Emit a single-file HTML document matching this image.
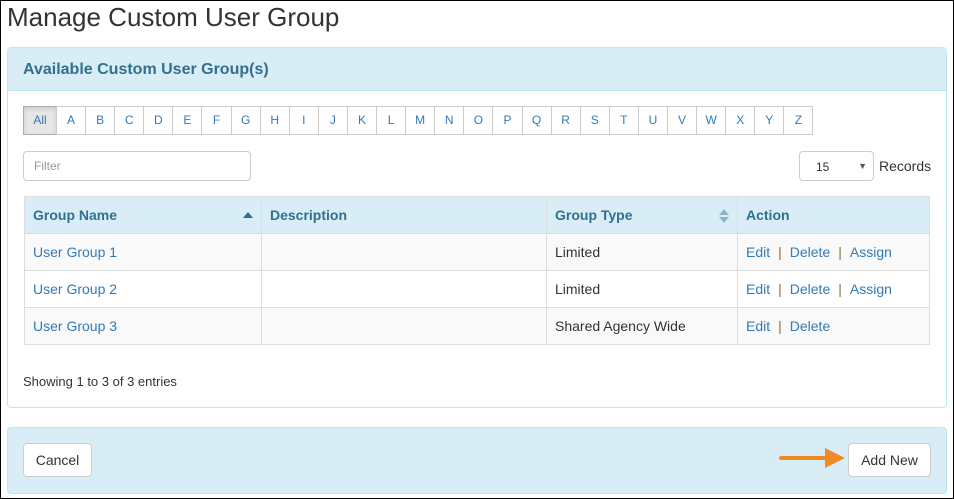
<!DOCTYPE html>
<html><head><style>
*{box-sizing:border-box;margin:0;padding:0}
body{width:954px;height:499px;background:#fff;font-family:"Liberation Sans",sans-serif;font-size:14px;color:#333;position:relative;overflow:hidden}
.frame{position:absolute;left:0;top:0;width:954px;height:499px;border:1px solid #000}
h1{position:absolute;left:7px;top:2px;font-size:26px;font-weight:normal;color:#333}
.panel{position:absolute;left:7px;top:47px;width:940px;height:361px;border:1px solid #bce8f1;border-radius:4px}
.ph{height:43px;background:#d9edf7;border-bottom:1px solid #bce8f1;color:#31708f;font-weight:bold;font-size:16px;padding:13px 15px}
.letters{position:absolute;left:23px;top:106px;display:flex;height:29px}
.letters span{border:1px solid #ccc;margin-left:-1px;height:29px;line-height:27px;text-align:center;color:#337ab7;font-size:12px;width:30.1px}
.letters span.all{width:34px;background:#e6e6e6;border-color:#adadad;box-shadow:inset 0 2px 4px rgba(0,0,0,.12);margin-left:0;color:#337ab7}
.filter{position:absolute;left:23px;top:151px;width:228px;height:30px;border:1px solid #ccc;border-radius:4px;color:#999;font-size:12px;padding:7px 10px}
.sel{position:absolute;left:799px;top:151px;width:75px;height:30px;border:1px solid #ccc;border-radius:4px;font-size:12px;padding:8px 16px}
.sel i{position:absolute;right:6px;top:9px;font-style:normal;font-size:9px;color:#555}
.rec{position:absolute;left:879px;top:158px}
table{position:absolute;left:24px;top:196px;width:906px;border-collapse:collapse}
td,th{border:1px solid #ddd;height:37px;padding:0 8px;text-align:left;position:relative}
th{background:#d9edf7;color:#31708f;font-weight:bold}
tr.o td{background:#f9f9f9}
a{color:#337ab7;text-decoration:none}
.sep{color:#8a6d3b;margin:0 8px}
.foot{position:absolute;left:7px;top:427px;width:940px;height:67px;background:#d9edf7;border:1px solid #bce8f1;border-radius:4px}
.btn{position:absolute;top:443px;height:34px;background:#fff;border:1px solid #ccc;border-radius:4px;line-height:32px;text-align:center;color:#333}
</style></head><body>
<h1>Manage Custom User Group</h1>
<div class="panel"><div class="ph">Available Custom User Group(s)</div></div>
<div class="letters"><span class="all">All</span><span>A</span><span>B</span><span>C</span><span>D</span><span>E</span><span>F</span><span>G</span><span>H</span><span>I</span><span>J</span><span>K</span><span>L</span><span>M</span><span>N</span><span>O</span><span>P</span><span>Q</span><span>R</span><span>S</span><span>T</span><span>U</span><span>V</span><span>W</span><span>X</span><span>Y</span><span>Z</span></div>
<div class="filter">Filter</div>
<div class="sel">15<i>▼</i></div>
<div class="rec">Records</div>
<table>
<tr><th style="width:237px">Group Name<svg style="position:absolute;right:8px;top:15px" width="10" height="6"><polygon points="0,6 5,0 10,6" fill="#31708f"/></svg></th><th style="width:285px">Description</th><th style="width:191px">Group Type<svg style="position:absolute;right:8px;top:12px" width="10" height="14"><polygon points="0,6 5,0 10,6" fill="#8ab4cc"/><polygon points="0,8 5,14 10,8" fill="#8ab4cc"/></svg></th><th>Action</th></tr>
<tr class="o"><td><a>User Group 1</a></td><td></td><td>Limited</td><td><a>Edit</a><span class="sep">|</span><a>Delete</a><span class="sep">|</span><a>Assign</a></td></tr>
<tr><td><a>User Group 2</a></td><td></td><td>Limited</td><td><a>Edit</a><span class="sep">|</span><a>Delete</a><span class="sep">|</span><a>Assign</a></td></tr>
<tr class="o"><td><a>User Group 3</a></td><td></td><td>Shared Agency Wide</td><td><a>Edit</a><span class="sep">|</span><a>Delete</a></td></tr>
</table>
<div style="position:absolute;left:23px;top:374px;font-size:13px">Showing 1 to 3 of 3 entries</div>
<div class="foot"></div>
<div class="btn" style="left:23px;width:69px">Cancel</div>
<div class="btn" style="left:848px;width:83px">Add New</div>
<svg style="position:absolute;left:778px;top:447px" width="70" height="22"><line x1="3" y1="11" x2="50" y2="11" stroke="#f08a24" stroke-width="4" stroke-linecap="round"/><polygon points="47,1 67,11 47,21" fill="#f08a24"/></svg>
<div class="frame"></div>
</body></html>
